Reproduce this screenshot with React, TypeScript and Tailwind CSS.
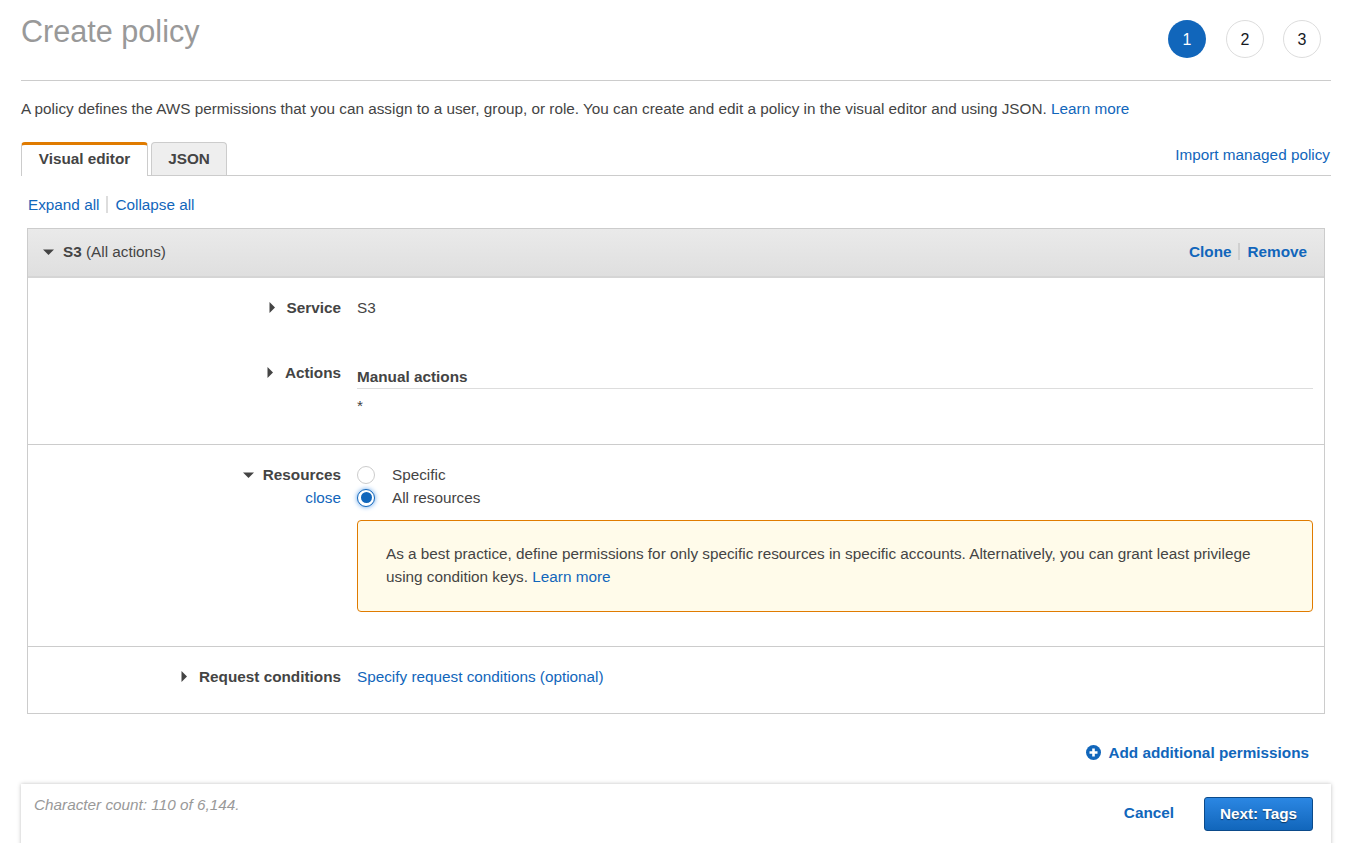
import type { ReactNode } from "react";

const link = "text-[#1166bb]";

function Caret({ open }: { open?: boolean }) {
  if (open) {
    return (
      <svg width="11" height="6" viewBox="0 0 11 6" className="shrink-0">
        <path d="M0 0.5h11L5.5 6z" fill="#444444" />
      </svg>
    );
  }
  return (
    <svg width="6" height="11" viewBox="0 0 6 11" className="shrink-0">
      <path d="M0.500 0v11L6 5.500z" fill="#444444" />
    </svg>
  );
}

function Step({ n, active }: { n: number; active?: boolean }) {
  return (
    <div
      className={
        active
          ? "w-[38px] h-[38px] mr-px rounded-full bg-[#1166bb] text-white flex items-center justify-center text-[16px]"
          : "w-[38px] h-[38px] rounded-full border border-[#dddddd] text-[#16191f] flex items-center justify-center text-[16px]"
      }
    >
      {n}
    </div>
  );
}

function Label({ open, children }: { open?: boolean; children: ReactNode }) {
  return (
    <div className={open ? "flex items-center justify-end gap-[9px] font-bold text-[#444444]" : "flex items-center justify-end gap-[12px] font-bold text-[#444444]"}>
      <Caret open={open} />
      <span>{children}</span>
    </div>
  );
}

export default function App() {
  return (
    <div className="w-[1346px] h-[843px] overflow-hidden bg-white pl-[21px] pr-[15px] text-[15.3px] leading-[23px] text-[#444444] font-['Liberation_Sans',Arial,sans-serif]">
      {/* Header */}
      <div className="h-[81px] border-b border-[#cccccc] flex justify-between">
        <h1 className="mt-[13px] text-[30.6px] leading-[36px] text-[#999999]">Create policy</h1>
        <div className="flex gap-[19px] mt-[20px] mr-[10px] h-[38px]">
          <Step n={1} active />
          <Step n={2} />
          <Step n={3} />
        </div>
      </div>

      <p className="mt-[16px] whitespace-nowrap">
        A policy defines the AWS permissions that you can assign to a user, group, or role. You can create and edit a
        policy in the visual editor and using JSON. <span className={link}>Learn more</span>
      </p>

      {/* Tabs */}
      <div className="mt-[22px] h-[34px] border-b border-[#cccccc] flex items-end justify-between">
        <div className="flex items-start gap-[3px] h-[33px]">
          <div className="w-[127px] h-[34px] bg-white border-x border-[#cccccc] border-t-[3px] border-t-[#e07b00] rounded-t-[4px] flex items-center justify-center font-bold pb-[4px]">
            Visual editor
          </div>
          <div className="w-[76px] h-[33px] bg-[#eeeeee] border-x border-t border-[#cccccc] rounded-t-[4px] flex items-center justify-center font-bold pb-[2px]">
            JSON
          </div>
        </div>
        <span className={`${link} mb-[9px] mr-[1px]`}>Import managed policy</span>
      </div>

      {/* Expand / collapse */}
      <div className="mt-[17px] ml-[7px] flex items-center h-[23px]">
        <span className={link}>Expand all</span>
        <span className="w-[2px] h-[17px] bg-[#dddddd] mx-[7px]" />
        <span className={link}>Collapse all</span>
      </div>

      {/* Permission block */}
      <div className="mt-[12px] mx-[6px] w-[1298px] h-[486px] border border-[#cccccc] flex flex-col">
        <div className="h-[49px] shrink-0 border-b-2 border-[#d5d5d5] bg-gradient-to-b from-[#eaeaea] to-[#dfdfdf] flex items-center justify-between pl-[15px] pr-[17px] pb-[2px]">
          <div className="flex items-center gap-[9px]">
            <Caret open />
            <span>
              <b>S3</b> (All actions)
            </span>
          </div>
          <div className="flex items-center font-bold">
            <span className={link}>Clone</span>
            <span className="w-[2px] h-[17px] bg-[#d0d0d0] mx-[7px]" />
            <span className={link}>Remove</span>
          </div>
        </div>

        {/* Service + actions */}
        <div className="h-[167px] shrink-0 border-b border-[#cccccc] grid grid-cols-[313px_1fr] gap-x-[16px] pr-[11px] content-start pt-[18px]">
          <Label>Service</Label>
          <div>S3</div>
          <div className="mt-[42px]">
            <Label>Actions</Label>
          </div>
          <div className="mt-[46px]">
            <div className="font-bold border-b border-[#dddddd] h-[24px]">Manual actions</div>
            <div className="mt-[5px]">*</div>
          </div>
        </div>

        {/* Resources */}
        <div className="h-[202px] shrink-0 border-b border-[#cccccc] grid grid-cols-[313px_1fr] gap-x-[16px] pr-[11px] content-start pt-[18px]">
          <div>
            <Label open>Resources</Label>
            <div className={`${link} text-right`}>close</div>
          </div>
          <div>
            <div className="flex items-center gap-[17px] h-[23px]">
              <span className="w-[18px] h-[18px] rounded-full border border-[#cccccc] bg-white" />
              <span>Specific</span>
            </div>
            <div className="flex items-center gap-[17px] h-[23px]">
              <span className="w-[18px] h-[18px] rounded-full border border-[#1166bb] bg-white flex items-center justify-center shadow-[0_0_5px_#5b9fe8]">
                <span className="w-[11px] h-[11px] rounded-full bg-[#1166bb]" />
              </span>
              <span>All resources</span>
            </div>
            <div className="mt-[11px] h-[92px] border border-[#e07b00] rounded-[4px] bg-[#fffbea] pl-[28px] pr-[40px] pt-[21px]">
              As a best practice, define permissions for only specific resources in specific accounts. Alternatively, you
              can grant least privilege using condition keys. <span className={link}>Learn more</span>
            </div>
          </div>
        </div>

        {/* Request conditions */}
        <div className="grid grid-cols-[313px_1fr] gap-x-[16px] pr-[11px] pt-[18px]">
          <Label>Request conditions</Label>
          <div className={link}>Specify request conditions (optional)</div>
        </div>
      </div>

      {/* Add permissions */}
      <div className={`${link} mt-[27px] mr-[22px] flex items-center justify-end gap-[7px] font-bold`}>
        <svg width="15" height="15" viewBox="0 0 15 15">
          <circle cx="7.500" cy="7.500" r="7.500" fill="#1166bb" />
          <path d="M6.200 3.500h2.600v2.700h2.700v2.600H8.800v2.700H6.200V8.800H3.500V6.200h2.700z" fill="#ffffff" />
        </svg>
        <span>Add additional permissions</span>
      </div>

      {/* Footer */}
      <div className="mt-[20px] h-[70px] bg-white shadow-[0_0_4px_rgba(0,0,0,0.25)] flex justify-between pl-[13px] pr-[18px]">
        <div className="mt-[9px] italic text-[#999999]">Character count: 110 of 6,144.</div>
        <div className="flex items-start gap-[30px] mt-[13px]">
          <span className={`${link} font-bold mt-[4px]`}>Cancel</span>
          <button className="w-[109px] h-[34px] pb-[2px] rounded-[3px] border border-[#0b4a8a] bg-gradient-to-b from-[#2b87e3] to-[#1166bb] text-white font-bold [text-shadow:0_1px_1px_rgba(0,0,0,0.5)]">
            Next: Tags
          </button>
        </div>
      </div>
    </div>
  );
}
